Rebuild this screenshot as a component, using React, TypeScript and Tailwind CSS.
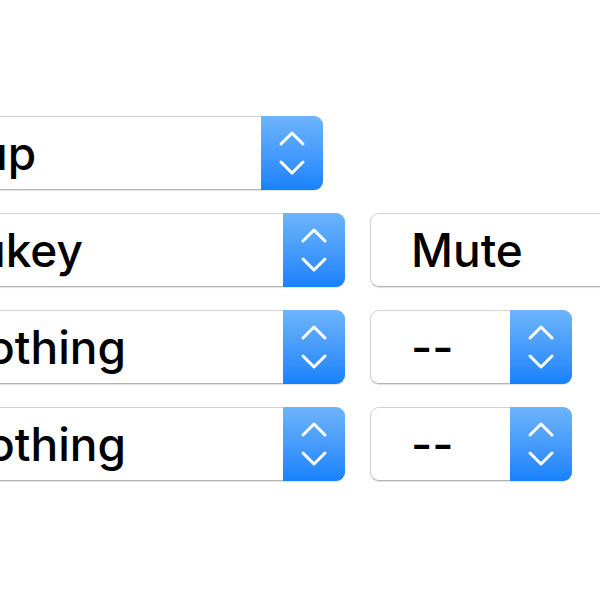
import React from "react";

function Chevrons() {
  return (
    <svg width="28" height="46" viewBox="0 0 28 46" fill="none">
      <polyline points="3,14 14,3 25,14" stroke="white" strokeWidth="3" strokeLinecap="round" strokeLinejoin="round" />
      <polyline points="3,32 14,43 25,32" stroke="white" strokeWidth="3" strokeLinecap="round" strokeLinejoin="round" />
    </svg>
  );
}

function Popup({ text, className, textClass }: { text: string; className: string; textClass: string }) {
  return (
    <div
      className={
        "flex h-[74px] shrink-0 rounded-[9px] border border-[#d2d2d2] border-b-[#b4b4b4] bg-white shadow-[0_1px_1px_rgba(0,0,0,0.12)] " +
        className
      }
    >
      <div className={"flex flex-1 items-center overflow-hidden whitespace-nowrap text-[46px] font-medium text-black" + " " + textClass}>
        {text}
      </div>
      <div className="-my-px -mr-px flex w-[62px] items-center justify-center rounded-r-[9px] bg-gradient-to-b from-[#6db4fb] to-[#1581fb]">
        <Chevrons />
      </div>
    </div>
  );
}

export default function App() {
  return (
    <div
      className="relative h-[600px] w-[600px] overflow-hidden bg-white"
      style={{ fontFamily: "Inter, 'Liberation Sans', sans-serif" }}
    >
      <div className="flex flex-col gap-[23px] pt-[116px]">
        <div className="flex">
          <Popup text="up" className="-ml-[100px] w-[423px]" textClass="pl-[79px]" />
        </div>
        <div className="flex gap-[25px]">
          <Popup text="ukey" className="-ml-[100px] w-[445px]" textClass="pl-[77px]" />
          <div className="flex h-[74px] w-[300px] shrink-0 items-center rounded-[9px] border border-[#d2d2d2] border-b-[#b4b4b4] bg-white pl-[40px] text-[46px] font-medium text-black shadow-[0_1px_1px_rgba(0,0,0,0.12)]">
            Mute
          </div>
        </div>
        <div className="flex gap-[25px]">
          <Popup text="othing" className="-ml-[100px] w-[445px]" textClass="pl-[86px]" />
          <Popup text="--" className="w-[202px]" textClass="pl-[40px]" />
        </div>
        <div className="flex gap-[25px]">
          <Popup text="othing" className="-ml-[100px] w-[445px]" textClass="pl-[86px]" />
          <Popup text="--" className="w-[202px]" textClass="pl-[40px]" />
        </div>
      </div>
    </div>
  );
}
